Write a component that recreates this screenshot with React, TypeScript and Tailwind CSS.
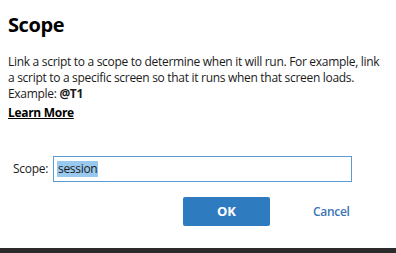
import React from 'react';

export default function App() {
  return (
    <div
      className="w-[396px] h-[253px] bg-white flex flex-col text-[#1a1a1a]"
      style={{ fontFamily: '"Open Sans", "Noto Sans", sans-serif' }}
    >
      <div className="flex-1 px-2 pt-[13px]">
        <h2 className="text-[20px] leading-[24px] font-bold text-black tracking-[-0.4px]">Scope</h2>
        <p className="mt-[17px] text-[12px] leading-[16px] tracking-[-0.3px]">
          Link a script to a scope to determine when it will run. For example, link
          <br />
          a script to a specific screen so that it runs when that screen loads.
          <br />
          Example: <span className="font-bold">@T1</span>
        </p>
        <a href="#" className="block mt-[3px] text-[12px] leading-[16px] font-bold text-black underline tracking-[-0.3px]">
          Learn More
        </a>

        {/* Scope input */}
        <div className="flex items-center mt-[35px] pl-[5px]">
          <label className="text-[12px] w-[40px] tracking-[-0.3px]">Scope:</label>
          <div className="w-[299px] h-[26px] border border-[#5b9bd5] flex items-center px-[3px]">
            <span className="bg-[#99c9ef] text-[12px] leading-[16px] px-[1px] text-[#1a1a1a] tracking-[-0.3px]">session</span>
          </div>
        </div>

        {/* Actions */}
        <div className="flex items-center mt-[15px] pl-[175px]">
          <button className="w-[87px] h-[29px] rounded-[2px] bg-[#2f7bbf] text-white text-[13px] font-bold">
            OK
          </button>
          <button className="ml-[43px] text-[12px] text-[#3a75b5] font-semibold tracking-[-0.3px]">
            Cancel
          </button>
        </div>
      </div>
      <div className="h-[5px] bg-[#2b2b2b]" />
    </div>
  );
}
